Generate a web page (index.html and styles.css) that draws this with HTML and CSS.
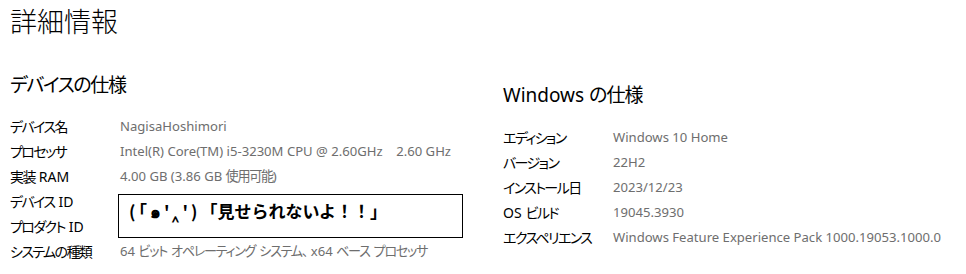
FILE: index.html
```html
<!DOCTYPE html>
<html lang="ja">
<head>
<meta charset="utf-8">
<link rel="stylesheet" href="styles.css">
</head>
<body>
<div class="page">
  <h1 class="title">詳細情報</h1>
  <div class="columns">
    <section class="spec device">
      <h2 class="heading">デバイスの仕様</h2>
      <div class="rows">
        <div class="row"><span class="label">デバイス名</span><span class="value">NagisaHoshimori</span></div>
        <div class="row"><span class="label">プロセッサ</span><span class="value">Intel(R) Core(TM) i5-3230M CPU @ 2.60GHz&nbsp;&nbsp;&nbsp;&nbsp;2.60 GHz</span></div>
        <div class="row"><span class="label">実装 <span class="lat">RAM</span></span><span class="value">4.00 GB (3.86 GB <span class="jp">使用可能</span>)</span></div>
        <div class="row"><span class="label">デバイス <span class="lat">ID</span></span><span class="value"></span></div>
        <div class="row"><span class="label">プロダクト <span class="lat">ID</span></span><span class="value"></span></div>
        <div class="row"><span class="label">システムの種類</span><span class="value">64 <span class="jp">ビット オペレーティング システム</span><span class="comma">、</span>x64 <span class="jp">ベース プロセッサ</span></span></div>
        <div class="mask"><span class="face">(「๑'‸')</span>「見せられないよ！！」</div>
      </div>
    </section>
    <section class="spec windows">
      <h2 class="heading">Windows <span class="jp">の仕様</span></h2>
      <div class="rows">
        <div class="row"><span class="label">エディション</span><span class="value">Windows 10 Home</span></div>
        <div class="row"><span class="label">バージョン</span><span class="value">22H2</span></div>
        <div class="row"><span class="label">インストール日</span><span class="value">2023/12/23</span></div>
        <div class="row"><span class="label"><span class="lat">OS</span> ビルド</span><span class="value">19045.3930</span></div>
        <div class="row"><span class="label">エクスペリエンス</span><span class="value">Windows Feature Experience Pack 1000.19053.1000.0</span></div>
      </div>
    </section>
  </div>
</div>
</body>
</html>
```

FILE: styles.css
```css
html, body {
  margin: 0;
  padding: 0;
  background: #ffffff;
}
body {
  font-family: "Noto Sans", "Noto Sans CJK JP", sans-serif;
  font-feature-settings: "palt";
  color: #000;
}
.page {
  padding: 4px 0 0 10px;
}
.title {
  margin: 0;
  font-weight: 300;
  font-size: 27px;
  line-height: 36px;
  color: #000;
}
.columns {
  display: flex;
  margin-top: 30px;
}
.spec {
  display: flex;
  flex-direction: column;
}
.device {
  width: 493px;
}
.windows {
  margin-top: 10px;
}
.heading {
  margin: 0;
  font-weight: 400;
  font-size: 19px;
  line-height: 30px;
}
.device .heading {
  letter-spacing: -1.4px;
}
.heading .jp {
  letter-spacing: -1px;
}
.rows {
  position: relative;
  margin-top: 13px;
  display: flex;
  flex-direction: column;
}
.windows .rows {
  margin-top: 14px;
}
.row {
  display: flex;
  height: 25px;
  align-items: center;
  font-size: 14px;
}
.label {
  width: 110px;
  flex: none;
  letter-spacing: -1.6px;
  word-spacing: 2px;
}
.label .lat {
  letter-spacing: 0;
}
.value {
  color: #6e6e6e;
  font-size: 13.1px;
  white-space: nowrap;
}
.value .jp {
  letter-spacing: -1.3px;
  word-spacing: 2px;
}
.value .comma {
  font-feature-settings: normal;
  letter-spacing: -4px;
}
.mask {
  position: absolute;
  left: 108px;
  top: 81px;
  width: 345px;
  height: 44px;
  box-sizing: border-box;
  border: 1px solid #000;
  background: #fff;
  padding: 3px 0 0 10px;
  font-weight: 700;
  font-size: 17px;
  line-height: 25px;
  font-family: "Noto Sans CJK JP", sans-serif;
  font-feature-settings: normal;
  white-space: nowrap;
}
.face {
  letter-spacing: 3px;
}
```
